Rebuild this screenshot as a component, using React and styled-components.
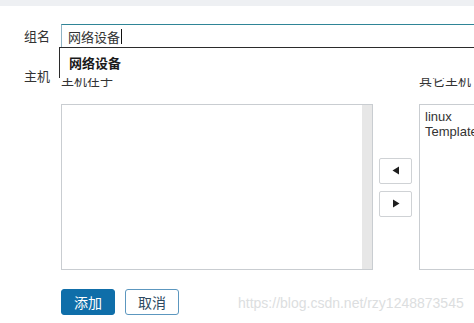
import React from 'react'
import styled, { createGlobalStyle } from 'styled-components'

const GlobalStyle = createGlobalStyle`
  html, body {
    margin: 0;
    padding: 0;
    background: #fff;
    overflow: hidden;
  }
  body {
    font-family: Arial, "Liberation Sans", "Noto Sans CJK SC", sans-serif;
    color: #333;
  }
`

const hostsIn = []
const otherHosts = ['linux', 'Template OS Linux']

const App = () => {
  return (
    <Page>
      <GlobalStyle />
      <TopBar />
      <Form>
        <Row>
          <Label>组名</Label>
          <InputWrap>
            <TextInput>
              网络设备
              <Caret />
            </TextInput>
            <Suggest>
              <SuggestItem>网络设备</SuggestItem>
            </Suggest>
          </InputWrap>
        </Row>

        <Row $top="18px">
          <Label $pad="2px">主机</Label>
          <Picker>
            <Column $width="312px">
              <SubLabel>主机在于</SubLabel>
              <ListBox>
                <ListItems>
                  {hostsIn.map((h) => (
                    <ListItem key={h}>{h}</ListItem>
                  ))}
                </ListItems>
                <ScrollTrack />
              </ListBox>
            </Column>

            <Arrows>
              <ArrowButton title="添加">
                <svg width="8" height="9" viewBox="0 0 8 9">
                  <path d="M7 0.5 L0.5 4.5 L7 8.5 Z" fill="#1e1e1e" />
                </svg>
              </ArrowButton>
              <ArrowButton title="移除">
                <svg width="8" height="9" viewBox="0 0 8 9">
                  <path d="M1 0.5 L7.5 4.5 L1 8.5 Z" fill="#1e1e1e" />
                </svg>
              </ArrowButton>
            </Arrows>

            <Column $width="160px">
              <SubLabel>其它主机</SubLabel>
              <ListBox>
                <ListItems>
                  {otherHosts.map((h) => (
                    <ListItem key={h}>{h}</ListItem>
                  ))}
                </ListItems>
              </ListBox>
            </Column>
          </Picker>
        </Row>

        <Actions>
          <PrimaryButton>添加</PrimaryButton>
          <OutlineButton>取消</OutlineButton>
        </Actions>
      </Form>
      <Watermark>https://blog.csdn.net/rzy1248873545</Watermark>
    </Page>
  )
}

const Page = styled.div`
  position: relative;
  width: 474px;
  height: 323px;
  overflow: hidden;
`

const TopBar = styled.div`
  height: 6px;
  background: #eef0f3;
`

const Form = styled.div`
  padding: 18px 0 0 24px;
`

const Row = styled.div`
  display: grid;
  grid-template-columns: 37px max-content;
  align-items: start;
  margin-top: ${(props) => props.$top || '0'};
`

const Label = styled.div`
  font-family: "Noto Sans CJK SC", sans-serif;
  font-size: 13px;
  line-height: 15px;
  color: #333;
  padding-top: ${(props) => props.$pad || '4px'};
  white-space: nowrap;
`

const InputWrap = styled.div`
  position: relative;
  width: 460px;
`

const TextInput = styled.div`
  box-sizing: border-box;
  height: 24px;
  border: 1px solid #8fb3c4;
  border-top-color: #2f8597;
  padding: 0 6px;
  display: flex;
  align-items: center;
  font-family: "Noto Sans CJK SC", sans-serif;
  font-size: 13px;
  color: #333;
`

const Caret = styled.span`
  display: inline-block;
  width: 1px;
  height: 15px;
  background: #111;
  margin-left: 1px;
`

const Suggest = styled.div`
  position: absolute;
  top: 23px;
  left: -2px;
  width: 480px;
  height: 31px;
  background: #fff;
  border-top: 1px solid #2b2b2b;
  border-left: 1px solid #2b2b2b;
  box-sizing: border-box;
  z-index: 2;
`

const SuggestItem = styled.div`
  padding: 7px 0 0 9px;
  font-family: "Noto Sans CJK SC", sans-serif;
  font-size: 13px;
  font-weight: 700;
  line-height: 15px;
  color: #1a1a1a;
`

const Picker = styled.div`
  display: flex;
  align-items: stretch;
`

const Column = styled.div`
  display: flex;
  flex-direction: column;
  width: ${(props) => props.$width};
`

const SubLabel = styled.div`
  font-family: "Noto Sans CJK SC", sans-serif;
  font-size: 13px;
  line-height: 15px;
  color: #333;
  padding-top: 6px;
  margin-bottom: 17px;
  white-space: nowrap;
`

const ListBox = styled.div`
  box-sizing: border-box;
  height: 166px;
  border: 1px solid #c9cdd1;
  background: #fff;
  display: flex;
`

const ListItems = styled.div`
  flex: 1;
  padding: 4px 5px;
`

const ListItem = styled.div`
  font-family: Arial, "Liberation Sans", sans-serif;
  font-size: 13px;
  line-height: 15px;
  color: #333;
  white-space: nowrap;
`

const ScrollTrack = styled.div`
  width: 10px;
  background: #e7e7e7;
`

const Arrows = styled.div`
  display: flex;
  flex-direction: column;
  justify-content: center;
  gap: 7px;
  padding: 38px 7px 0 6px;
`

const ArrowButton = styled.button`
  box-sizing: border-box;
  width: 33px;
  height: 26px;
  padding: 0;
  border: 1px solid #cfd2d5;
  border-radius: 2px;
  background: #fff;
  display: flex;
  align-items: center;
  justify-content: center;
  cursor: pointer;
`

const Actions = styled.div`
  display: flex;
  gap: 10px;
  margin: 19px 0 0 37px;
`

const BaseButton = styled.button`
  box-sizing: border-box;
  width: 54px;
  height: 26px;
  padding: 0;
  border-radius: 3px;
  font-family: "Noto Sans CJK SC", sans-serif;
  font-size: 14px;
  cursor: pointer;
`

const PrimaryButton = styled(BaseButton)`
  background: #0f6ea9;
  border: 1px solid #0f6ea9;
  color: #fff;
`

const OutlineButton = styled(BaseButton)`
  background: #fff;
  border: 1px solid #5c97bf;
  color: #2d4a61;
`

const Watermark = styled.div`
  position: absolute;
  left: 238px;
  top: 294px;
  font-family: Arial, "Liberation Sans", sans-serif;
  font-size: 14px;
  line-height: 18px;
  color: #dcdee0;
  pointer-events: none;
  white-space: nowrap;
`

export default App
